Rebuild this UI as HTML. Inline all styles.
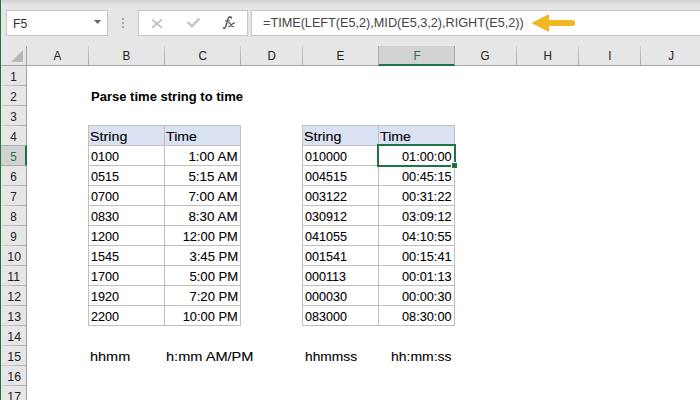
<!DOCTYPE html>
<html><head><meta charset="utf-8"><style>
*{margin:0;padding:0;box-sizing:border-box}
html,body{width:700px;height:400px;overflow:hidden;background:#fff;font-family:"Liberation Sans",sans-serif;position:relative}
.a{position:absolute}
.ch{position:absolute;top:46px;height:19px;text-align:center;font-size:13px;line-height:19px;color:#222}
.rh{position:absolute;left:1px;width:25px;height:20px;text-align:center;font-size:13px;line-height:20px;padding-top:1px;color:#222}
.ch span,.rh span{display:inline-block;transform:scaleX(0.9);transform-origin:50% 50%}
.vs{position:absolute;top:46px;width:1px;height:19px;background:linear-gradient(#cfcfcf,#a8a8a8)}
.hs{position:absolute;left:1px;width:25px;height:1px;background:linear-gradient(to right,#d0d0d0,#a8a8a8)}
.t{position:absolute;font-size:13.5px;color:#000;white-space:nowrap;line-height:20px;height:20px;-webkit-text-stroke:0.1px #000}
.r{text-align:right}
</style></head><body>
<!-- toolbar background -->
<div class="a" style="left:0;top:0;width:700px;height:46px;background:linear-gradient(#d0d0d0 0px,#dedede 3px,#e6e6e6 6px,#e6e6e6 46px)"></div>
<!-- name box -->
<div class="a" style="left:6px;top:10px;width:102px;height:26px;background:#fff;border:1px solid #c6c6c6"></div>
<div class="a" style="left:13px;top:15px;font-size:13px;line-height:18px;color:#333"><span style="display:inline-block;transform:scaleX(0.94);transform-origin:0 50%">F5</span></div>
<svg class="a" style="left:93px;top:19px" width="10" height="6"><path d="M1 1H8.2L4.6 5Z" fill="#686868"/></svg>
<div class="a" style="left:122px;top:18px;width:2px;height:2px;background:#adadad"></div>
<div class="a" style="left:122px;top:22px;width:2px;height:2px;background:#adadad"></div>
<div class="a" style="left:122px;top:26px;width:2px;height:2px;background:#adadad"></div>
<!-- buttons box -->
<div class="a" style="left:138px;top:10px;width:110px;height:26px;background:#fff;border:1px solid #c6c6c6"></div>
<svg class="a" style="left:150px;top:17px" width="14" height="13"><path d="M2 2.5L11.8 10.7M11.8 2.5L2 10.7" stroke="#c4c4c4" stroke-width="1.9" fill="none"/></svg>
<svg class="a" style="left:184px;top:15px" width="18" height="16"><path d="M4.4 7.6L7.9 11.3L14.6 4.3" stroke="#c8c8c8" stroke-width="2.6" fill="none" stroke-linecap="round" stroke-linejoin="round"/></svg>
<svg class="a" style="left:220px;top:14px" width="18" height="18"><path d="M3.3 14.1C4.6 14.5 5.4 13.7 5.9 12L7.9 4.9C8.4 3.1 9.4 2.5 11 3.1" stroke="#5c5c5c" stroke-width="1.5" fill="none" stroke-linecap="round"/><circle cx="11.2" cy="3.8" r="0.95" fill="#5c5c5c"/><path d="M5.1 6.9H10.1" stroke="#5c5c5c" stroke-width="1.1"/><path d="M8.6 8.9C9.4 8.6 9.9 9 10.4 9.9L11.6 12C12 12.6 12.6 12.8 13.7 12.5M14.5 8.9C13.2 9.2 12 10.2 10.9 11.3C10.1 12.1 9.5 12.6 8.4 12.5" stroke="#5c5c5c" stroke-width="1.2" fill="none" stroke-linecap="round"/></svg>
<!-- formula box -->
<div class="a" style="left:251px;top:10px;width:460px;height:26px;background:#fff;border:1px solid #c6c6c6"></div>
<div class="a" style="left:263px;top:14px;font-size:13.5px;line-height:18px;color:#444;white-space:nowrap"><span style="display:inline-block;transform:scaleX(0.938);transform-origin:0 50%">=TIME(LEFT(E5,2),MID(E5,3,2),RIGHT(E5,2))</span></div>
<svg class="a" style="left:530px;top:13px" width="48" height="21"><path d="M1.4 9.9L19 0.9V7.1H42.2A2.9 2.9 0 0 1 42.2 12.9H19V18.9Z" fill="#f2b824"/></svg>

<!-- left green line -->
<div class="a" style="left:0;top:0;width:1px;height:400px;background:#217346"></div>

<!-- column header row -->
<div class="a" style="left:1px;top:46px;width:699px;height:19px;background:#e6e6e6"></div>
<div class="a" style="left:1px;top:65px;width:699px;height:1px;background:#a6a6a6"></div>
<svg class="a" style="left:10px;top:49px" width="14" height="14"><path d="M1 13H13V1Z" fill="#b8b8b8"/></svg>
<div class="a" style="left:378px;top:46px;width:77px;height:19px;background:#d2d2d2"></div>
<div class="a" style="left:378px;top:64px;width:77px;height:2px;background:#217346"></div>
<div class="vs" style="left:26px"></div>
<div class="vs" style="left:88px"></div>
<div class="vs" style="left:164px"></div>
<div class="vs" style="left:240px"></div>
<div class="vs" style="left:302px"></div>
<div class="vs" style="left:378px;background:#ababab"></div>
<div class="vs" style="left:454px;background:#ababab"></div>
<div class="vs" style="left:516px"></div>
<div class="vs" style="left:578px"></div>
<div class="vs" style="left:640px"></div>
<div class="ch" style="left:27px;width:61px"><span>A</span></div>
<div class="ch" style="left:89px;width:75px"><span>B</span></div>
<div class="ch" style="left:165px;width:75px"><span>C</span></div>
<div class="ch" style="left:241px;width:61px"><span>D</span></div>
<div class="ch" style="left:303px;width:75px"><span>E</span></div>
<div class="ch" style="left:379px;width:75px;color:#217346"><span>F</span></div>
<div class="ch" style="left:455px;width:61px"><span>G</span></div>
<div class="ch" style="left:517px;width:61px"><span>H</span></div>
<div class="ch" style="left:579px;width:61px"><span>I</span></div>
<div class="ch" style="left:641px;width:61px"><span>J</span></div>

<!-- row header column -->
<div class="a" style="left:1px;top:66px;width:25px;height:334px;background:#e6e6e6"></div>
<div class="a" style="left:26px;top:46px;width:1px;height:354px;background:#a4a4a4"></div>
<div class="a" style="left:1px;top:145px;width:25px;height:20px;background:#d2d2d2"></div>
<div class="a" style="left:25px;top:145px;width:2px;height:21px;background:#217346"></div>
<div class="hs" style="top:85px"></div>
<div class="hs" style="top:105px"></div>
<div class="hs" style="top:125px"></div>
<div class="hs" style="top:145px;background:#ababab"></div>
<div class="hs" style="top:165px;background:#ababab"></div>
<div class="hs" style="top:185px"></div>
<div class="hs" style="top:205px"></div>
<div class="hs" style="top:225px"></div>
<div class="hs" style="top:245px"></div>
<div class="hs" style="top:265px"></div>
<div class="hs" style="top:285px"></div>
<div class="hs" style="top:305px"></div>
<div class="hs" style="top:325px"></div>
<div class="hs" style="top:345px"></div>
<div class="hs" style="top:365px"></div>
<div class="hs" style="top:385px"></div>
<div class="rh" style="top:66px"><span>1</span></div>
<div class="rh" style="top:86px"><span>2</span></div>
<div class="rh" style="top:106px"><span>3</span></div>
<div class="rh" style="top:126px"><span>4</span></div>
<div class="rh" style="top:146px;color:#217346"><span>5</span></div>
<div class="rh" style="top:166px"><span>6</span></div>
<div class="rh" style="top:186px"><span>7</span></div>
<div class="rh" style="top:206px"><span>8</span></div>
<div class="rh" style="top:226px"><span>9</span></div>
<div class="rh" style="top:246px;padding-left:1px"><span style="transform:scaleX(0.95)">10</span></div>
<div class="rh" style="top:266px;padding-left:1px"><span style="transform:scaleX(0.95)">11</span></div>
<div class="rh" style="top:286px;padding-left:1px"><span style="transform:scaleX(0.95)">12</span></div>
<div class="rh" style="top:306px;padding-left:1px"><span style="transform:scaleX(0.95)">13</span></div>
<div class="rh" style="top:326px;padding-left:1px"><span style="transform:scaleX(0.95)">14</span></div>
<div class="rh" style="top:346px;padding-left:1px"><span style="transform:scaleX(0.95)">15</span></div>
<div class="rh" style="top:366px;padding-left:1px"><span style="transform:scaleX(0.95)">16</span></div>
<div class="rh" style="top:386px;padding-left:1px"><span style="transform:scaleX(0.95)">17</span></div>

<!-- title -->
<div class="t" style="left:91px;top:87px;font-weight:bold;-webkit-text-stroke:0"><span style="display:inline-block;transform:scaleX(0.965);transform-origin:0 50%">Parse time string to time</span></div>

<!-- TABLES_START -->
<div class="a" style="left:88px;top:125px;width:152px;height:20px;background:#d9e1f2"></div>
<div class="a" style="left:88px;top:125px;width:153px;height:1px;background:#bfbfbf"></div>
<div class="a" style="left:88px;top:145px;width:153px;height:1px;background:#bfbfbf"></div>
<div class="a" style="left:88px;top:165px;width:153px;height:1px;background:#bfbfbf"></div>
<div class="a" style="left:88px;top:185px;width:153px;height:1px;background:#bfbfbf"></div>
<div class="a" style="left:88px;top:205px;width:153px;height:1px;background:#bfbfbf"></div>
<div class="a" style="left:88px;top:225px;width:153px;height:1px;background:#bfbfbf"></div>
<div class="a" style="left:88px;top:245px;width:153px;height:1px;background:#bfbfbf"></div>
<div class="a" style="left:88px;top:265px;width:153px;height:1px;background:#bfbfbf"></div>
<div class="a" style="left:88px;top:285px;width:153px;height:1px;background:#bfbfbf"></div>
<div class="a" style="left:88px;top:305px;width:153px;height:1px;background:#bfbfbf"></div>
<div class="a" style="left:88px;top:325px;width:153px;height:1px;background:#bfbfbf"></div>
<div class="a" style="left:88px;top:125px;width:1px;height:201px;background:#bfbfbf"></div>
<div class="a" style="left:164px;top:125px;width:1px;height:201px;background:#bfbfbf"></div>
<div class="a" style="left:240px;top:125px;width:1px;height:201px;background:#bfbfbf"></div>
<div class="t" style="left:90px;top:127px"><span style="display:inline-block;transform:scaleX(1.059);transform-origin:0 50%">String</span></div>
<div class="t" style="left:166px;top:127px"><span style="display:inline-block;transform:scaleX(1.05);transform-origin:0 50%">Time</span></div>
<div class="t" style="left:91px;top:147px"><span style="display:inline-block;transform:scaleX(0.933);transform-origin:0 50%">0100</span></div>
<div class="t r" style="left:138px;width:100px;top:147px"><span style="display:inline-block;transform:scaleX(0.992);transform-origin:100% 50%">1:00 AM</span></div>
<div class="t" style="left:91px;top:167px"><span style="display:inline-block;transform:scaleX(0.933);transform-origin:0 50%">0515</span></div>
<div class="t r" style="left:138px;width:100px;top:167px"><span style="display:inline-block;transform:scaleX(0.992);transform-origin:100% 50%">5:15 AM</span></div>
<div class="t" style="left:91px;top:187px"><span style="display:inline-block;transform:scaleX(0.933);transform-origin:0 50%">0700</span></div>
<div class="t r" style="left:138px;width:100px;top:187px"><span style="display:inline-block;transform:scaleX(0.992);transform-origin:100% 50%">7:00 AM</span></div>
<div class="t" style="left:91px;top:207px"><span style="display:inline-block;transform:scaleX(0.933);transform-origin:0 50%">0830</span></div>
<div class="t r" style="left:138px;width:100px;top:207px"><span style="display:inline-block;transform:scaleX(0.992);transform-origin:100% 50%">8:30 AM</span></div>
<div class="t" style="left:91px;top:227px"><span style="display:inline-block;transform:scaleX(0.933);transform-origin:0 50%">1200</span></div>
<div class="t r" style="left:138px;width:100px;top:227px"><span style="display:inline-block;transform:scaleX(0.954);transform-origin:100% 50%">12:00 PM</span></div>
<div class="t" style="left:91px;top:247px"><span style="display:inline-block;transform:scaleX(0.933);transform-origin:0 50%">1545</span></div>
<div class="t r" style="left:138px;width:100px;top:247px"><span style="display:inline-block;transform:scaleX(0.972);transform-origin:100% 50%">3:45 PM</span></div>
<div class="t" style="left:91px;top:267px"><span style="display:inline-block;transform:scaleX(0.933);transform-origin:0 50%">1700</span></div>
<div class="t r" style="left:138px;width:100px;top:267px"><span style="display:inline-block;transform:scaleX(0.972);transform-origin:100% 50%">5:00 PM</span></div>
<div class="t" style="left:91px;top:287px"><span style="display:inline-block;transform:scaleX(0.933);transform-origin:0 50%">1920</span></div>
<div class="t r" style="left:138px;width:100px;top:287px"><span style="display:inline-block;transform:scaleX(0.972);transform-origin:100% 50%">7:20 PM</span></div>
<div class="t" style="left:91px;top:307px"><span style="display:inline-block;transform:scaleX(0.933);transform-origin:0 50%">2200</span></div>
<div class="t r" style="left:138px;width:100px;top:307px"><span style="display:inline-block;transform:scaleX(0.954);transform-origin:100% 50%">10:00 PM</span></div>
<div class="a" style="left:302px;top:125px;width:152px;height:20px;background:#d9e1f2"></div>
<div class="a" style="left:302px;top:125px;width:153px;height:1px;background:#bfbfbf"></div>
<div class="a" style="left:302px;top:145px;width:153px;height:1px;background:#bfbfbf"></div>
<div class="a" style="left:302px;top:165px;width:153px;height:1px;background:#bfbfbf"></div>
<div class="a" style="left:302px;top:185px;width:153px;height:1px;background:#bfbfbf"></div>
<div class="a" style="left:302px;top:205px;width:153px;height:1px;background:#bfbfbf"></div>
<div class="a" style="left:302px;top:225px;width:153px;height:1px;background:#bfbfbf"></div>
<div class="a" style="left:302px;top:245px;width:153px;height:1px;background:#bfbfbf"></div>
<div class="a" style="left:302px;top:265px;width:153px;height:1px;background:#bfbfbf"></div>
<div class="a" style="left:302px;top:285px;width:153px;height:1px;background:#bfbfbf"></div>
<div class="a" style="left:302px;top:305px;width:153px;height:1px;background:#bfbfbf"></div>
<div class="a" style="left:302px;top:325px;width:153px;height:1px;background:#bfbfbf"></div>
<div class="a" style="left:302px;top:125px;width:1px;height:201px;background:#bfbfbf"></div>
<div class="a" style="left:378px;top:125px;width:1px;height:201px;background:#bfbfbf"></div>
<div class="a" style="left:454px;top:125px;width:1px;height:201px;background:#bfbfbf"></div>
<div class="t" style="left:304px;top:127px"><span style="display:inline-block;transform:scaleX(1.059);transform-origin:0 50%">String</span></div>
<div class="t" style="left:380px;top:127px"><span style="display:inline-block;transform:scaleX(1.05);transform-origin:0 50%">Time</span></div>
<div class="t" style="left:305px;top:147px"><span style="display:inline-block;transform:scaleX(0.93);transform-origin:0 50%">010000</span></div>
<div class="t r" style="left:352px;width:100px;top:147px"><span style="display:inline-block;transform:scaleX(0.942);transform-origin:100% 50%">01:00:00</span></div>
<div class="t" style="left:305px;top:167px"><span style="display:inline-block;transform:scaleX(0.93);transform-origin:0 50%">004515</span></div>
<div class="t r" style="left:352px;width:100px;top:167px"><span style="display:inline-block;transform:scaleX(0.942);transform-origin:100% 50%">00:45:15</span></div>
<div class="t" style="left:305px;top:187px"><span style="display:inline-block;transform:scaleX(0.93);transform-origin:0 50%">003122</span></div>
<div class="t r" style="left:352px;width:100px;top:187px"><span style="display:inline-block;transform:scaleX(0.942);transform-origin:100% 50%">00:31:22</span></div>
<div class="t" style="left:305px;top:207px"><span style="display:inline-block;transform:scaleX(0.93);transform-origin:0 50%">030912</span></div>
<div class="t r" style="left:352px;width:100px;top:207px"><span style="display:inline-block;transform:scaleX(0.942);transform-origin:100% 50%">03:09:12</span></div>
<div class="t" style="left:305px;top:227px"><span style="display:inline-block;transform:scaleX(0.93);transform-origin:0 50%">041055</span></div>
<div class="t r" style="left:352px;width:100px;top:227px"><span style="display:inline-block;transform:scaleX(0.942);transform-origin:100% 50%">04:10:55</span></div>
<div class="t" style="left:305px;top:247px"><span style="display:inline-block;transform:scaleX(0.93);transform-origin:0 50%">001541</span></div>
<div class="t r" style="left:352px;width:100px;top:247px"><span style="display:inline-block;transform:scaleX(0.942);transform-origin:100% 50%">00:15:41</span></div>
<div class="t" style="left:305px;top:267px"><span style="display:inline-block;transform:scaleX(0.93);transform-origin:0 50%">000113</span></div>
<div class="t r" style="left:352px;width:100px;top:267px"><span style="display:inline-block;transform:scaleX(0.942);transform-origin:100% 50%">00:01:13</span></div>
<div class="t" style="left:305px;top:287px"><span style="display:inline-block;transform:scaleX(0.93);transform-origin:0 50%">000030</span></div>
<div class="t r" style="left:352px;width:100px;top:287px"><span style="display:inline-block;transform:scaleX(0.942);transform-origin:100% 50%">00:00:30</span></div>
<div class="t" style="left:305px;top:307px"><span style="display:inline-block;transform:scaleX(0.93);transform-origin:0 50%">083000</span></div>
<div class="t r" style="left:352px;width:100px;top:307px"><span style="display:inline-block;transform:scaleX(0.942);transform-origin:100% 50%">08:30:00</span></div>
<div class="a" style="left:377px;top:144px;width:79px;height:23px;border:2px solid #217346"></div>
<div class="a" style="left:452px;top:163px;width:5px;height:5px;background:#217346;outline:1px solid #fff"></div>
<div class="t" style="left:90px;top:347px"><span style="display:inline-block;transform:scaleX(1.072);transform-origin:0 50%">hhmm</span></div>
<div class="t" style="left:166px;top:347px"><span style="display:inline-block;transform:scaleX(1.08);transform-origin:0 50%">h:mm AM/PM</span></div>
<div class="t" style="left:305px;top:347px"><span style="display:inline-block;transform:scaleX(1.02);transform-origin:0 50%">hhmmss</span></div>
<div class="t r" style="left:352px;width:100px;top:347px"><span style="display:inline-block;transform:scaleX(1.035);transform-origin:100% 50%">hh:mm:ss</span></div>
<!-- TABLES_END -->
</body></html>
